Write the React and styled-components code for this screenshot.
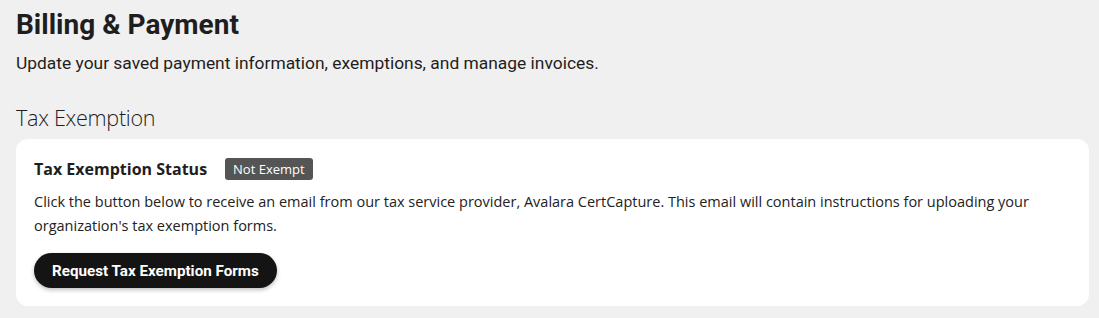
import React from 'react'
import styled, { createGlobalStyle } from 'styled-components'

const GlobalStyle = createGlobalStyle`
  body {
    margin: 0;
    background: #f0f0f0;
    font-family: Roboto, "Liberation Sans", sans-serif;
    color: #1c1c1c;
  }
`

const Page = styled.div`
  padding: 6px 10px 12px 16px;
`

const Title = styled.h1`
  margin: 0;
  font-size: 28px;
  font-weight: 700;
  line-height: 38px;
  color: #1e1e1e;
`

const Subtitle = styled.p`
  margin: 7px 0 0;
  font-size: 17.4px;
  line-height: 24px;
  color: #1e1e1e;
`

const SectionTitle = styled.h2`
  margin: 27px 0 5px;
  font-family: "Open Sans", sans-serif;
  font-weight: 300;
  font-size: 21.6px;
  line-height: 32px;
  letter-spacing: -0.3px;
  color: #1e1e1e;
`

const Card = styled.section`
  background: #fff;
  border-radius: 12px;
  padding: 19px 18px 18px;
  font-family: "Open Sans", sans-serif;
`

const StatusRow = styled.div`
  display: flex;
  align-items: center;
  gap: 18px;
`

const StatusLabel = styled.h3`
  margin: 0;
  font-size: 16px;
  font-weight: 700;
  color: #1e1e1e;
`

const Badge = styled.span`
  background: #555;
  color: #fff;
  font-size: 13px;
  line-height: 22px;
  padding: 0 8px;
  border-radius: 3px;
`

const Text = styled.p`
  margin: 10px 0 15px;
  font-size: 14.5px;
  line-height: 24px;
  color: #222;
`

const Button = styled.button`
  height: 35px;
  padding: 0 18px;
  border: none;
  border-radius: 18px;
  background: #141414;
  color: #fff;
  font-family: Roboto, sans-serif;
  font-weight: 700;
  font-size: 15.2px;
  box-shadow: 0 2px 4px rgba(0, 0, 0, 0.25);
  cursor: pointer;
`

export default function App() {
  return (
    <Page>
      <GlobalStyle />
      <Title>Billing &amp; Payment</Title>
      <Subtitle>Update your saved payment information, exemptions, and manage invoices.</Subtitle>
      <SectionTitle>Tax Exemption</SectionTitle>
      <Card>
        <StatusRow>
          <StatusLabel>Tax Exemption Status</StatusLabel>
          <Badge>Not Exempt</Badge>
        </StatusRow>
        <Text>
          Click the button below to receive an email from our tax service provider, Avalara CertCapture. This email will contain instructions for uploading your organization's tax exemption forms.
        </Text>
        <Button>Request Tax Exemption Forms</Button>
      </Card>
    </Page>
  )
}
